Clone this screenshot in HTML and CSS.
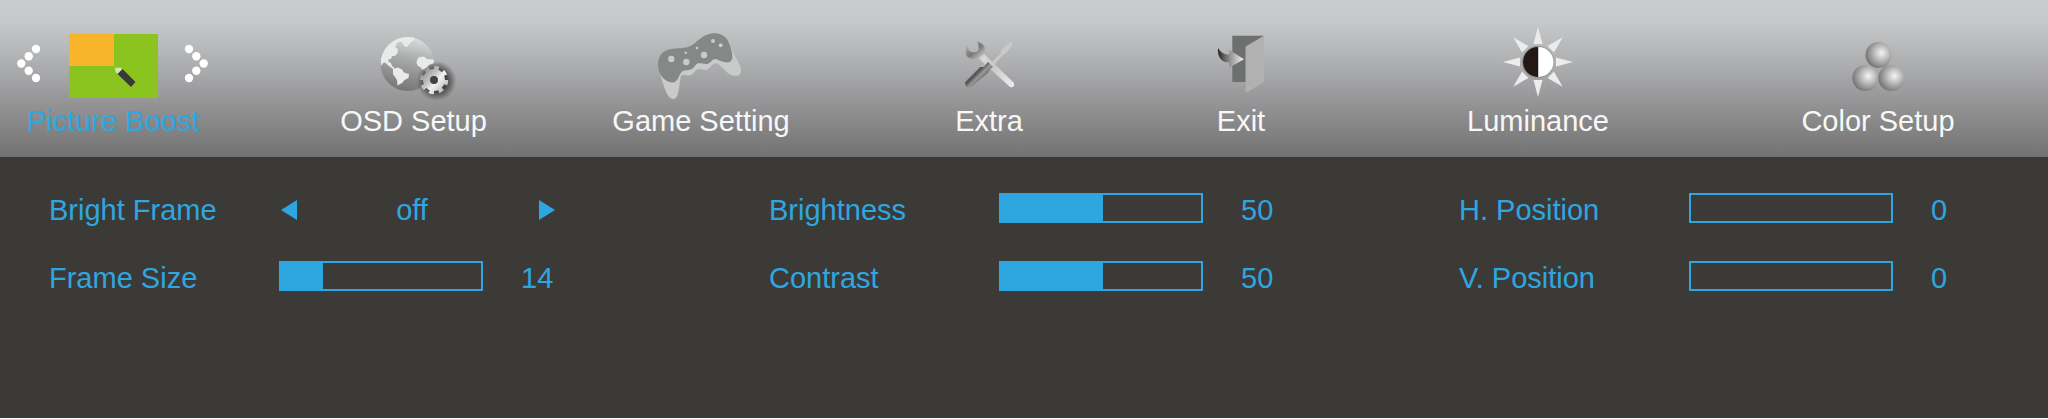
FILE: index.html
```html
<!DOCTYPE html>
<html lang="en">
<head>
    <meta charset="UTF-8">
    <meta name="viewport" content="width=device-width, initial-scale=1.0">
    <title>Picture Boost</title>
    <link rel="stylesheet" href="styles.css">
</head>
<body>
    <nav class="menu">
        <div class="menu-item current">
            <button class="tab active" type="button">
                <svg class="icon" viewBox="0 0 100 80" aria-hidden="true">
                    <rect x="6" y="14" width="89" height="64" fill="#8cc41f"/>
                    <rect x="6" y="14" width="45" height="32" fill="#f7b52c"/>
                    <path d="M52 48 L57.5 47.500 L60 50 L55.5 54 L52.5 52 Z" fill="#d3e6b5"/>
                    <path d="M59.500 49 L72.500 62 L68 67 L54.500 54 Z" fill="#3a3937"/>
                </svg>
                <span>Picture Boost</span>
            </button>
            <button class="arrow prev" type="button" aria-label="Previous menu">
                <svg viewBox="0 0 26 80" aria-hidden="true" fill="#fff">
                    <circle cx="19" cy="29" r="4.200"/>
                    <circle cx="11.700" cy="36.200" r="4.200"/>
                    <circle cx="4.300" cy="43.500" r="4.200"/>
                    <circle cx="11.700" cy="50.800" r="4.200"/>
                    <circle cx="19" cy="58" r="4.200"/>
                </svg>
            </button>
            <button class="arrow next" type="button" aria-label="Next menu">
                <svg viewBox="0 0 26 80" aria-hidden="true" fill="#fff">
                    <circle cx="6" cy="29" r="4.200"/>
                    <circle cx="13.300" cy="36.200" r="4.200"/>
                    <circle cx="20.700" cy="43.500" r="4.200"/>
                    <circle cx="13.300" cy="50.800" r="4.200"/>
                    <circle cx="6" cy="58" r="4.200"/>
                </svg>
            </button>
        </div>

        <div class="menu-item">
            <button class="tab" type="button">
                <svg class="icon" viewBox="0 0 100 80" aria-hidden="true">
                    <defs>
                        <linearGradient id="globe" x1="0.6" y1="0" x2="0.4" y2="1">
                            <stop offset="0" stop-color="#dcdddd"/>
                            <stop offset="0.4" stop-color="#a9aaab"/>
                            <stop offset="1" stop-color="#757576"/>
                        </linearGradient>
                        <linearGradient id="gear" gradientUnits="userSpaceOnUse" x1="58" y1="50" x2="82" y2="70">
                            <stop offset="0" stop-color="#8b8b8b"/>
                            <stop offset="0.4" stop-color="#c4c4c4"/>
                            <stop offset="0.6" stop-color="#f2f2f2"/>
                            <stop offset="1" stop-color="#b4b4b4"/>
                        </linearGradient>
                        <radialGradient id="gearShadow">
                            <stop offset="0.5" stop-color="#3b3535" stop-opacity="0.9"/>
                            <stop offset="1" stop-color="#3b3535" stop-opacity="0"/>
                        </radialGradient>
                        <clipPath id="globeClip"><circle cx="43.500" cy="44" r="27"/></clipPath>
                    </defs>
                    <circle cx="43.500" cy="44" r="27" fill="url(#globe)"/>
                    <g clip-path="url(#globeClip)" fill="#e9eaea">
                        <path d="M17 46 L16 34 L24 24 L36 16 L52 17 L50 20 L47 22 L43 27 L40 26 L38 22 L34 22 L31 27 L34 29 L33.5 33 L31 36 L28 36 L27 39 L24 39.500 L25 42 L27 43 L28 46 L31 48 L29 49 L25 46 L21 42.500 L19 43 Z"/>
                        <path d="M29 49 L34 47.500 L38 49.500 L40 52.500 L45 54 L44.500 58 L40.500 60 L38 63 L33.500 65.500 L33 60 L29 54 Z"/>
                    </g>
                    <circle cx="72.500" cy="61" r="20" fill="url(#gearShadow)"/>
                    <path d="M53 40 L55 37 L60 36.500 L63 39 L69.500 39.500 L70 43 L65 45 L62 48 L58 50 L57 47.500 L54 46 L52.500 43 Z" fill="#e9eaea"/>
                    <circle cx="70" cy="60" r="7.500" fill="none" stroke="url(#gear)" stroke-width="7"/>
                    <circle cx="70" cy="60" r="12" fill="none" stroke="url(#gear)" stroke-width="4.500" pathLength="16" stroke-dasharray="1 1"/>
                </svg>
                <span>OSD Setup</span>
            </button>
        </div>

        <div class="menu-item">
            <button class="tab" type="button">
                <svg class="icon" viewBox="0 0 100 80" aria-hidden="true">
                    <path d="M8 50 C12 62 15 79 22.500 79 C28.500 79 28 63 30 56 C33 53 36 57 40 55 C44 53 44 49 48 49 C52 49 54 51 57 49 C60 47 62 42 66 43.500 C72 46 76 56 85 56 C93 55 90 47 87 42 L80 28 Z" fill="#c9caca"/>
                    <path d="M7 44 C7 34 14 29 24 28.500 C33 28 38 28 44 23 C51 17 56 13.300 63 13.300 C73 13.300 77 19 79 26 C81 32 83 39 79.500 41.500 C75 44 70 41 65 39 C61 38 60 44 55 44 C50 44 47 41.500 44 46 C40 52 35 49 31 51.500 C28 54 27 63 21 62.500 C13 62 7 54 7 44 Z" fill="#868787"/>
                    <g fill="#c9caca">
                        <circle cx="20.300" cy="39" r="3.200"/>
                        <circle cx="35.300" cy="42" r="3.200"/>
                        <circle cx="53" cy="35" r="3.200"/>
                        <circle cx="62" cy="21" r="2"/>
                        <circle cx="69.700" cy="25.300" r="2"/>
                        <circle cx="34.700" cy="32.700" r="1.300"/>
                        <circle cx="46" cy="28" r="1.300"/>
                    </g>
                </svg>
                <span>Game Setting</span>
            </button>
        </div>

        <div class="menu-item">
            <button class="tab" type="button">
                <svg class="icon" viewBox="0 0 100 80" aria-hidden="true">
                    <defs>
                        <linearGradient id="wrench" gradientUnits="userSpaceOnUse" x1="28" y1="30" x2="75" y2="66">
                            <stop offset="0" stop-color="#777"/>
                            <stop offset="0.3" stop-color="#d9d9d9"/>
                            <stop offset="0.5" stop-color="#c6c6c6"/>
                            <stop offset="1" stop-color="#eee"/>
                        </linearGradient>
                        <linearGradient id="jaw" x1="0" y1="0" x2="1" y2="1">
                            <stop offset="0" stop-color="#c5c5c5"/>
                            <stop offset="0.5" stop-color="#777"/>
                            <stop offset="1" stop-color="#ddd"/>
                        </linearGradient>
                        <linearGradient id="handle" gradientUnits="userSpaceOnUse" x1="34" y1="51" x2="42" y2="59">
                            <stop offset="0" stop-color="#888"/>
                            <stop offset="0.35" stop-color="#505050"/>
                            <stop offset="0.7" stop-color="#999"/>
                            <stop offset="1" stop-color="#777"/>
                        </linearGradient>
                    </defs>
                    <path d="M36 35 L42 31 L75 63 Q76 68 71 67 Z" fill="url(#wrench)"/>
                    <path d="M28.500 25 C24 34 28 40 37 39 L42 36 L45 34 C48 29 45 23 38 21.500 C40 26 41 31 37 32 C32 33 29 31 28.500 25 Z" fill="url(#jaw)"/>
                    <path d="M51 44 L62 33 C62 29 66 26 73 21.500 C74 25 70 32 64 35 L54 46 Z" fill="#c9c9c9"/>
                    <path d="M49 42 L54 47 L51 49 L49 53 L32 67 Q26 69 26 62 L41 47 L45 47 Z" fill="url(#handle)"/>
                </svg>
                <span>Extra</span>
            </button>
        </div>

        <div class="menu-item">
            <button class="tab" type="button">
                <svg class="icon" viewBox="0 0 100 80" aria-hidden="true">
                    <defs>
                        <linearGradient id="exitArrow" x1="0" y1="0" x2="1" y2="0">
                            <stop offset="0" stop-color="#2c2423"/>
                            <stop offset="0.5" stop-color="#999"/>
                            <stop offset="1" stop-color="#f4f4f4"/>
                        </linearGradient>
                    </defs>
                    <path d="M41.300 15.700 H73 L54.700 26.700 V62 H41.300 Z" fill="#6e6f6f"/>
                    <path d="M54.700 26.700 L73 15.700 V62 L54.700 73 Z" fill="#b1b1b2"/>
                    <path d="M27 28 C30 33 34 35 38.500 34.500 V30 L53 39.300 L38.500 47.500 V42.500 C31 43 26 37 27 28 Z" fill="url(#exitArrow)"/>
                </svg>
                <span>Exit</span>
            </button>
        </div>

        <div class="menu-item">
            <button class="tab" type="button">
                <svg class="icon" viewBox="0 0 100 80" aria-hidden="true">
                    <circle cx="50" cy="42" r="16" fill="#8d8d8e"/>
                    <path d="M50 27 A15 15 0 0 0 50 57 Z" fill="#231815"/>
                    <path d="M50.500 27 A15 15 0 0 1 50.500 57 Z" fill="#fff"/>
                    <g fill="#ececed">
                        <path id="ray" d="M50 7 L54.500 24 H45.500 Z"/>
                        <use href="#ray" transform="rotate(45 50 42)"/>
                        <use href="#ray" transform="rotate(90 50 42)"/>
                        <use href="#ray" transform="rotate(135 50 42)"/>
                        <use href="#ray" transform="rotate(180 50 42)"/>
                        <use href="#ray" transform="rotate(225 50 42)"/>
                        <use href="#ray" transform="rotate(270 50 42)"/>
                        <use href="#ray" transform="rotate(315 50 42)"/>
                    </g>
                </svg>
                <span>Luminance</span>
            </button>
        </div>

        <div class="menu-item">
            <button class="tab" type="button">
                <svg class="icon" viewBox="0 0 100 80" aria-hidden="true">
                    <defs>
                        <radialGradient id="ball" cx="0.62" cy="0.42" r="0.66">
                            <stop offset="0" stop-color="#f4f4f4"/>
                            <stop offset="0.35" stop-color="#c6c6c6"/>
                            <stop offset="1" stop-color="#6e6e6e"/>
                        </radialGradient>
                    </defs>
                    <circle cx="50.500" cy="35" r="13" fill="url(#ball)"/>
                    <circle cx="37.300" cy="58" r="13" fill="url(#ball)"/>
                    <circle cx="63.300" cy="58" r="13" fill="url(#ball)"/>
                </svg>
                <span>Color Setup</span>
            </button>
        </div>
    </nav>

    <main class="panel">
        <div class="group">
            <div class="setting">
                <span class="name">Bright Frame</span>
                <div class="chooser">
                    <button class="step" type="button" aria-label="Previous value">
                        <svg viewBox="0 0 16 30" aria-hidden="true"><path d="M0 15 L16 5 V25 Z"/></svg>
                    </button>
                    <span class="choice">off</span>
                    <button class="step" type="button" aria-label="Next value">
                        <svg viewBox="0 0 16 30" aria-hidden="true"><path d="M16 15 L0 5 V25 Z"/></svg>
                    </button>
                </div>
            </div>
            <div class="setting">
                <label class="name" for="frameSize">Frame Size</label>
                <input class="slider" type="range" id="frameSize" min="0" max="66" value="14" style="--fill: 21%">
                <output class="value" for="frameSize">14</output>
            </div>
        </div>

        <div class="group">
            <div class="setting">
                <label class="name" for="brightness">Brightness</label>
                <input class="slider" type="range" id="brightness" min="0" max="100" value="50" style="--fill: 51%">
                <output class="value" for="brightness">50</output>
            </div>
            <div class="setting">
                <label class="name" for="contrast">Contrast</label>
                <input class="slider" type="range" id="contrast" min="0" max="100" value="50" style="--fill: 51%">
                <output class="value" for="contrast">50</output>
            </div>
        </div>

        <div class="group">
            <div class="setting">
                <label class="name" for="hPosition">H. Position</label>
                <input class="slider" type="range" id="hPosition" min="0" max="100" value="0" style="--fill: 0%">
                <output class="value" for="hPosition">0</output>
            </div>
            <div class="setting">
                <label class="name" for="vPosition">V. Position</label>
                <input class="slider" type="range" id="vPosition" min="0" max="100" value="0" style="--fill: 0%">
                <output class="value" for="vPosition">0</output>
            </div>
        </div>
    </main>
</body>
</html>
```
FILE: styles.css
```css
* {
    margin: 0;
    padding: 0;
    box-sizing: border-box;
}

body {
    font-family: "Liberation Sans", Arial, sans-serif;
    font-size: 29px;
    line-height: 34px;
    background: #fff;
    min-height: 100vh;
    display: flex;
    flex-direction: column;
}

button {
    background: none;
    border: none;
    font: inherit;
    color: inherit;
    cursor: pointer;
}

svg {
    display: block;
}

/* Top menu */
.menu {
    display: grid;
    grid-template-columns: 226fr 375fr 200fr 376fr 128fr 466fr 214fr 63fr;
    padding: 20px 0 15px;
    background: linear-gradient(180deg, #cacbcc 0%, #c6c7c8 15%, #a9aaac 45%, #98989a 62%, #727272 100%);
    color: #f7f7f7;
}

.menu-item {
    display: grid;
    justify-content: center;
}

.tab {
    display: flex;
    flex-direction: column;
    align-items: center;
    line-height: 42px;
    white-space: nowrap;
}

.tab.active {
    color: #2ea7e0;
}

.icon {
    width: 100px;
    height: 80px;
}

.current {
    grid-template-columns: 26px 140px 26px;
    grid-template-rows: 80px 42px;
}

.current .tab {
    grid-area: 1 / 1 / 3 / 4;
}

.prev {
    grid-area: 1 / 1;
}

.next {
    grid-area: 1 / 3;
}

/* Settings */
.panel {
    flex: 1;
    display: grid;
    grid-template-columns: 720fr 690fr 589fr;
    padding: 36px 0 36px 49px;
    margin-bottom: 1px;
    background: #3c3a37;
    color: #2ea7e0;
}

.group {
    display: flex;
    flex-direction: column;
    gap: 34px;
}

.setting {
    display: flex;
    align-items: flex-start;
}

.name {
    width: 230px;
}

.slider {
    appearance: none;
    -webkit-appearance: none;
    width: 204px;
    height: 30px;
    border: 2px solid #2ea7e0;
    background: linear-gradient(#2ea7e0, #2ea7e0) no-repeat left / var(--fill) 100%;
    cursor: pointer;
}

.slider::-webkit-slider-thumb {
    -webkit-appearance: none;
    width: 1px;
    height: 26px;
    opacity: 0;
}

.value {
    margin-left: 38px;
}

.chooser {
    display: flex;
    justify-content: space-between;
    width: 278px;
    padding: 0 2px;
}

.choice {
    padding-right: 12px;
}

.step svg {
    width: 16px;
    height: 30px;
    fill: #2ea7e0;
}
```
